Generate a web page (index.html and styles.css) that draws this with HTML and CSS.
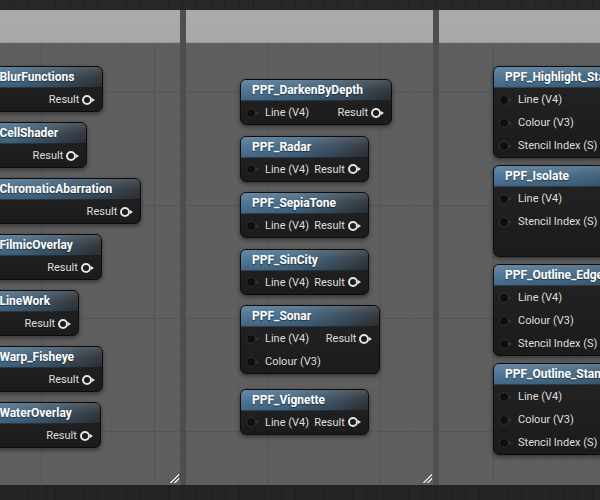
FILE: index.html
```html
<!DOCTYPE html>
<html>
<head>
<meta charset="utf-8">
<title>Post Process Functions</title>
<link rel="stylesheet" href="styles.css">
</head>
<body>
<div class="graph">
  <div class="strip"></div>
  <div class="comments">
    <section class="comment comment-left">
      <div class="comment-head"></div>
      <div class="comment-body col-left">
        <div class="node">
          <div class="node-head">PPF_BlurFunctions</div>
          <div class="node-body"><div class="outs"><div class="row"><span>Result</span><i class="pin pin-out"></i></div></div></div>
        </div>
        <div class="node">
          <div class="node-head">PPF_CellShader</div>
          <div class="node-body"><div class="outs"><div class="row"><span>Result</span><i class="pin pin-out"></i></div></div></div>
        </div>
        <div class="node">
          <div class="node-head">PPF_ChromaticAbarration</div>
          <div class="node-body"><div class="outs"><div class="row"><span>Result</span><i class="pin pin-out"></i></div></div></div>
        </div>
        <div class="node">
          <div class="node-head">PPF_FilmicOverlay</div>
          <div class="node-body"><div class="outs"><div class="row"><span>Result</span><i class="pin pin-out"></i></div></div></div>
        </div>
        <div class="node">
          <div class="node-head">PPF_LineWork</div>
          <div class="node-body"><div class="outs"><div class="row"><span>Result</span><i class="pin pin-out"></i></div></div></div>
        </div>
        <div class="node">
          <div class="node-head">PPF_Warp_Fisheye</div>
          <div class="node-body"><div class="outs"><div class="row"><span>Result</span><i class="pin pin-out"></i></div></div></div>
        </div>
        <div class="node">
          <div class="node-head">PPF_WaterOverlay</div>
          <div class="node-body"><div class="outs"><div class="row"><span>Result</span><i class="pin pin-out"></i></div></div></div>
        </div>
        <span class="resize"></span>
      </div>
    </section>

    <section class="comment comment-mid">
      <div class="comment-head"></div>
      <div class="comment-body col-mid">
        <div class="node">
          <div class="node-head">PPF_DarkenByDepth</div>
          <div class="node-body">
            <div class="ins"><div class="row"><i class="pin pin-in"></i><span>Line (V4)</span></div></div>
            <div class="outs"><div class="row"><span>Result</span><i class="pin pin-out"></i></div></div>
          </div>
        </div>
        <div class="node">
          <div class="node-head">PPF_Radar</div>
          <div class="node-body">
            <div class="ins"><div class="row"><i class="pin pin-in"></i><span>Line (V4)</span></div></div>
            <div class="outs"><div class="row"><span>Result</span><i class="pin pin-out"></i></div></div>
          </div>
        </div>
        <div class="node">
          <div class="node-head">PPF_SepiaTone</div>
          <div class="node-body">
            <div class="ins"><div class="row"><i class="pin pin-in"></i><span>Line (V4)</span></div></div>
            <div class="outs"><div class="row"><span>Result</span><i class="pin pin-out"></i></div></div>
          </div>
        </div>
        <div class="node">
          <div class="node-head">PPF_SinCity</div>
          <div class="node-body">
            <div class="ins"><div class="row"><i class="pin pin-in"></i><span>Line (V4)</span></div></div>
            <div class="outs"><div class="row"><span>Result</span><i class="pin pin-out"></i></div></div>
          </div>
        </div>
        <div class="node">
          <div class="node-head">PPF_Sonar</div>
          <div class="node-body">
            <div class="ins">
              <div class="row"><i class="pin pin-in"></i><span>Line (V4)</span></div>
              <div class="row"><i class="pin pin-in"></i><span>Colour (V3)</span></div>
            </div>
            <div class="outs"><div class="row"><span>Result</span><i class="pin pin-out"></i></div></div>
          </div>
        </div>
        <div class="node node-spaced">
          <div class="node-head">PPF_Vignette</div>
          <div class="node-body">
            <div class="ins"><div class="row"><i class="pin pin-in"></i><span>Line (V4)</span></div></div>
            <div class="outs"><div class="row"><span>Result</span><i class="pin pin-out"></i></div></div>
          </div>
        </div>
        <span class="resize"></span>
      </div>
    </section>

    <section class="comment comment-right">
      <div class="comment-head"></div>
      <div class="comment-body col-right">
        <div class="node node-wide">
          <div class="node-head">PPF_Highlight_Stance</div>
          <div class="node-body">
            <div class="ins">
              <div class="row"><i class="pin pin-in"></i><span>Line (V4)</span></div>
              <div class="row"><i class="pin pin-in"></i><span>Colour (V3)</span></div>
              <div class="row"><i class="pin pin-in"></i><span>Stencil Index (S)</span></div>
            </div>
          </div>
        </div>
        <div class="node node-wide">
          <div class="node-head">PPF_Isolate</div>
          <div class="node-body">
            <div class="ins">
              <div class="row"><i class="pin pin-in"></i><span>Line (V4)</span></div>
              <div class="row"><i class="pin pin-in"></i><span>Stencil Index (S)</span></div>
              <div class="row"></div>
            </div>
          </div>
        </div>
        <div class="node node-wide">
          <div class="node-head">PPF_Outline_Edges</div>
          <div class="node-body">
            <div class="ins">
              <div class="row"><i class="pin pin-in"></i><span>Line (V4)</span></div>
              <div class="row"><i class="pin pin-in"></i><span>Colour (V3)</span></div>
              <div class="row"><i class="pin pin-in"></i><span>Stencil Index (S)</span></div>
            </div>
          </div>
        </div>
        <div class="node node-wide">
          <div class="node-head">PPF_Outline_Standard</div>
          <div class="node-body">
            <div class="ins">
              <div class="row"><i class="pin pin-in"></i><span>Line (V4)</span></div>
              <div class="row"><i class="pin pin-in"></i><span>Colour (V3)</span></div>
              <div class="row"><i class="pin pin-in"></i><span>Stencil Index (S)</span></div>
            </div>
          </div>
        </div>
      </div>
    </section>
  </div>
  <div class="strip strip-bottom"></div>
</div>
</body>
</html>
```

FILE: styles.css
```css
html, body {
  margin: 0;
  padding: 0;
  overflow: hidden;
  background: #252525;
}

.graph {
  width: 600px;
  height: 500px;
  overflow: hidden;
  display: flex;
  flex-direction: column;
  font-family: Roboto, "Liberation Sans", sans-serif;
}

.strip {
  height: 10px;
  flex: none;
  background-color: #282828;
  background-image:
    linear-gradient(to right, rgba(255,255,255,0.05) 1px, transparent 1px),
    linear-gradient(to right, rgba(0,0,0,0.18) 1px, transparent 1px);
  background-size: 113px 100%, 14.125px 100%;
  background-position: 41px 0, 41px 0;
  background-attachment: fixed;
}

.strip-bottom {
  flex: 1;
  height: auto;
  background-color: #242424;
}

.comments {
  height: 475px;
  flex: none;
  display: flex;
  gap: 6px;
  background: linear-gradient(to right, #555 0, #4a4a4a 50%, #555 100%);
  background: #4e4e4e;
}

.comment {
  flex: none;
  display: flex;
  flex-direction: column;
}

.comment-left { width: 274px; margin-left: -94px; }
.comment-mid { width: 247px; }
.comment-right { width: 300px; }

.comment-head {
  height: 33px;
  flex: none;
  background: linear-gradient(#ababab, #a7a7a7);
  box-shadow: inset 0 -1px 0 rgba(0,0,0,0.08);
}

.comment-body {
  flex: 1;
  position: relative;
  display: flex;
  flex-direction: column;
  align-items: flex-start;
  padding-left: 54px;
  background-color: #5f5f5f;
  background-image:
    linear-gradient(to right, rgba(0,0,0,0.08) 1px, transparent 1px),
    linear-gradient(to bottom, rgba(0,0,0,0.08) 1px, transparent 1px),
    linear-gradient(to right, rgba(0,0,0,0.03) 1px, transparent 1px),
    linear-gradient(to bottom, rgba(0,0,0,0.03) 1px, transparent 1px);
  background-size: 113px 113px, 113px 113px, 14.125px 14.125px, 14.125px 14.125px;
  background-position: 41px 92px, 41px 92px, 41px 92px, 41px 92px;
  background-attachment: fixed;
}

.col-left { padding-top: 23px; gap: 10px; }
.col-mid { padding-top: 36px; gap: 10.5px; }
.col-right { padding-top: 23px; gap: 7px; }

.resize {
  position: absolute;
  right: 1px;
  bottom: 2px;
  width: 11px;
  height: 11px;
  background: repeating-linear-gradient(135deg, rgba(235,235,235,0.9) 0 1.2px, transparent 1.2px 3px);
  clip-path: polygon(100% 0, 100% 100%, 0 100%);
}

/* Nodes */
.node {
  width: fit-content;
  border: 1px solid #0c0c0c;
  border-radius: 6px;
  background: linear-gradient(#242424, #1b1b1b);
  box-shadow: 0 2px 4px rgba(0,0,0,0.45);
  overflow: hidden;
}

.node-spaced { margin-top: 4px; }
.node-wide { width: 200px; }

.node-head {
  height: 21px;
  line-height: 21px;
  padding: 0 28px 0 11px;
  color: #ffffff;
  font-size: 12px;
  font-weight: 700;
  white-space: nowrap;
  text-shadow: 0 1px 1px rgba(0,0,0,0.5);
  background:
    linear-gradient(to bottom, rgba(255,255,255,0.16) 0, rgba(255,255,255,0.04) 45%, rgba(0,0,0,0.12) 100%),
    linear-gradient(to right, #4b7395 0%, #426783 40%, #364a5b 75%, #2d3135 100%);
  box-shadow: inset 0 -1px 0 rgba(0,0,0,0.35);
}

.node-body {
  display: flex;
  justify-content: space-between;
  gap: 5px;
  padding: 0 6px 0 5px;
}

.outs { margin-left: auto; }

.row {
  height: 23px;
  display: flex;
  align-items: center;
  gap: 5px;
  font-size: 11px;
  color: #dedede;
  white-space: nowrap;
}

.outs .row { gap: 3px; justify-content: flex-end; }

/* Pin glyphs */
.pin {
  position: relative;
  flex: none;
  width: 14px;
  height: 10px;
}

.pin::before {
  content: "";
  position: absolute;
  left: 0;
  top: 0;
  width: 10px;
  height: 10px;
  box-sizing: border-box;
  border-radius: 50%;
}

.pin::after {
  content: "";
  position: absolute;
  left: 10px;
  top: 3px;
  border-left: 3px solid;
  border-top: 2px solid transparent;
  border-bottom: 2px solid transparent;
}

.pin-in::before { background: #0e0e0e; border: 1.5px solid #333333; }
.pin-in::after { border-left-color: #333333; }

.pin-out::before { background: #1c1c1c; border: 2px solid #e4e4e4; }
.pin-out::after { border-left-color: #e4e4e4; }
```
